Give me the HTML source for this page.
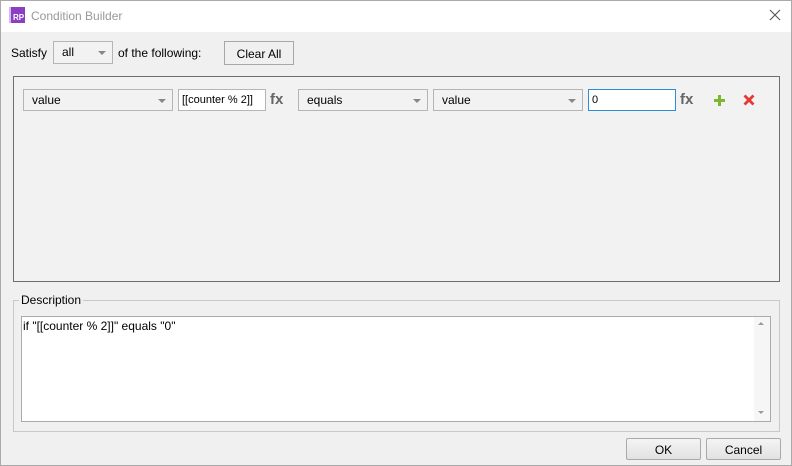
<!DOCTYPE html><html><head><style>
*{box-sizing:border-box;margin:0;padding:0}
body{width:792px;height:466px;position:relative;background:#f0f0f0;font-family:"Liberation Sans",Arial,sans-serif;font-size:12px;color:#000;overflow:hidden}
.a{position:absolute}
.win{left:0;top:0;width:792px;height:466px;border:1px solid #aaa}
.sel{position:absolute;background:#f2f2f2;border:1px solid #b5b5b5;padding:3px 0 0 8px;font-size:12px}
.sel:after{content:"";position:absolute;right:6px;top:9px;border-left:4px solid transparent;border-right:4px solid transparent;border-top:4px solid #888}
.inp{position:absolute;background:#fff;border:1px solid #b5b5b5;padding:4px 0 0 3px;font-size:11px}
.fx{position:absolute;font-weight:bold;color:#666;font-size:15px}
.btn{position:absolute;border:1px solid #aaa;border-radius:2px;background:linear-gradient(#f4f4f4,#e2e2e2);text-align:center;padding-top:4px}
</style></head><body>
<div class="a win"></div>
<div class="a" style="left:1px;top:1px;width:790px;height:31px;background:#fff"></div>
<div class="a" style="left:9px;top:7px;width:16px;height:16px;background:#8a3fc4"></div>
<div class="a" style="left:9px;top:7px;width:2px;height:16px;background:#d9b8f0"></div>
<div class="a" style="left:13px;top:13px;color:#fff;font-size:8px;font-weight:bold">RP</div>
<div class="a" style="left:31px;top:9px;color:#999;font-size:12px">Condition Builder</div>
<svg class="a" style="left:769px;top:9px" width="12" height="12"><path d="M1 1L11 11M11 1L1 11" stroke="#555" stroke-width="1.1"/></svg>
<div class="a" style="left:11px;top:46px">Satisfy</div>
<div class="sel" style="left:53px;top:41px;width:60px;height:23px">all</div>
<div class="a" style="left:118px;top:46px">of the following:</div>
<div class="btn" style="left:224px;top:41px;width:70px;height:24px;background:#f0f0f0;border-color:#a8a8a8;padding-top:5px;border-radius:0">Clear All</div>
<div class="a" style="left:13px;top:76px;width:767px;height:206px;border:1px solid #6e6e6e;background:#f2f2f2"></div>
<div class="sel" style="left:23px;top:89px;width:150px;height:22px">value</div>
<div class="inp" style="left:178px;top:89px;width:88px;height:22px">[[counter % 2]]</div>
<div class="fx" style="left:270px;top:91px">fx</div>
<div class="sel" style="left:298px;top:89px;width:130px;height:22px">equals</div>
<div class="sel" style="left:433px;top:89px;width:150px;height:22px">value</div>
<div class="inp" style="left:588px;top:89px;width:88px;height:22px;border-color:#2d8ed6">0</div>
<div class="fx" style="left:680px;top:91px">fx</div>
<svg class="a" style="left:713px;top:94px" width="13" height="13"><path d="M6.5 1V12M1 6.5H12" stroke="#7cb82f" stroke-width="3"/></svg>
<svg class="a" style="left:743px;top:94px" width="12" height="12"><path d="M1.5 1.5L10.5 10.5M10.5 1.5L1.5 10.5" stroke="#e53935" stroke-width="2.8"/></svg>
<div class="a" style="left:13px;top:300px;width:767px;height:132px;border:1px solid #c8c8c8"></div>
<div class="a" style="left:19px;top:293px;background:#f0f0f0;padding:0 2px">Description</div>
<div class="a" style="left:21px;top:316px;width:750px;height:106px;border:1px solid #aaa;background:#fff;padding:2px 0 0 1px">if "[[counter % 2]]" equals "0"</div>
<div class="a" style="left:754px;top:317px;width:16px;height:104px;background:#f6f6f6"></div>
<div class="a" style="left:758px;top:322px;border-left:3px solid transparent;border-right:3px solid transparent;border-bottom:3px solid #999"></div>
<div class="a" style="left:758px;top:411px;border-left:3px solid transparent;border-right:3px solid transparent;border-top:3px solid #999"></div>
<div class="btn" style="left:626px;top:438px;width:75px;height:22px">OK</div>
<div class="btn" style="left:706px;top:438px;width:75px;height:22px">Cancel</div>
</body></html>
